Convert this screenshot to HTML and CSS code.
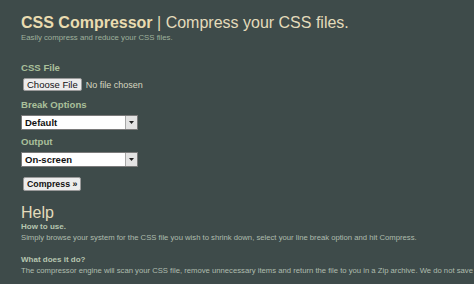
FILE: index.html
```html
<!DOCTYPE html>
<html>
<head>
<meta charset="utf-8">
<title>CSS Compressor</title>
<link rel="stylesheet" href="styles.css">
</head>
<body>
<div class="page">
  <header class="header">
    <h1 class="title"><strong>CSS Compressor</strong> | Compress your CSS files.</h1>
    <p class="tagline">Easily compress and reduce your CSS files.</p>
  </header>
  <form class="form">
    <div class="field field-file">
      <label class="label">CSS File</label>
      <div class="file-row">
        <span class="btn">Choose File</span>
        <span class="file-status">No file chosen</span>
      </div>
    </div>
    <div class="field">
      <label class="label">Break Options</label>
      <div class="select">
        <span class="select-value">Default</span>
        <span class="select-arrow"><svg width="5" height="3" viewBox="0 0 5 3"><path d="M0 0H5L2.5 3Z" fill="#222"/></svg></span>
      </div>
    </div>
    <div class="field">
      <label class="label">Output</label>
      <div class="select">
        <span class="select-value">On-screen</span>
        <span class="select-arrow"><svg width="5" height="3" viewBox="0 0 5 3"><path d="M0 0H5L2.5 3Z" fill="#222"/></svg></span>
      </div>
    </div>
    <div class="submit-row">
      <span class="btn btn-bold">Compress &raquo;</span>
    </div>
  </form>
  <section class="help">
    <h2 class="help-title">Help</h2>
    <h3 class="help-q">How to use.</h3>
    <p class="help-a">Simply browse your system for the CSS file you wish to shrink down, select your line break option and hit Compress.</p>
    <h3 class="help-q help-q-gap">What does it do?</h3>
    <p class="help-a">The compressor engine will scan your CSS file, remove unnecessary items and return the file to you in a Zip archive. We do not save</p>
  </section>
</div>
</body>
</html>
```
FILE: styles.css
```css
html, body {
  margin: 0;
  padding: 0;
  background: #3e4b4a;
  overflow: hidden;
}
body {
  font-family: "Liberation Sans", Arial, sans-serif;
  width: 474px;
  height: 284px;
}
.page {
  padding: 13px 0 0 21px;
  white-space: nowrap;
}
.title {
  margin: 0;
  font-size: 16px;
  line-height: 20px;
  font-weight: normal;
  color: #e4dbbb;
}
.title strong {
  font-weight: bold;
  color: #eadcb0;
}
.tagline {
  margin: 0;
  font-size: 7.8px;
  line-height: 10px;
  color: #9fb19d;
}
.form {
  margin-top: 19px;
}
.field {
  margin-bottom: 6px;
}
.field-file {
  margin-bottom: 8px;
}
.label {
  display: block;
  font-size: 9.6px;
  font-weight: bold;
  line-height: 12px;
  color: #aac09b;
  margin-bottom: 4px;
}
.file-row {
  display: flex;
  align-items: center;
  gap: 4px;
  padding-left: 2px;
}
.btn {
  display: inline-block;
  font-size: 9.5px;
  line-height: 11px;
  padding: 0 3px;
  color: #111;
  background: #ececec;
  border: 1px solid #9a9a9a;
  border-radius: 2px;
}
.btn-bold {
  font-weight: bold;
  font-size: 8.8px;
  padding: 1px 3px 0;
}
.file-status {
  font-size: 9px;
  color: #d6d6c0;
}
.select {
  display: flex;
  width: 117px;
  height: 15px;
  box-sizing: border-box;
  background: #fff;
  border: 1px solid #7a7a7a;
}
.select-value {
  flex: 1;
  font-size: 9.5px;
  font-weight: bold;
  line-height: 13px;
  padding-left: 3px;
  color: #111;
}
.select-arrow {
  width: 11px;
  display: flex;
  align-items: center;
  justify-content: center;
  background: #e3e3e3;
  border-left: 1px solid #a8a8a8;
}
.submit-row {
  padding: 0 0 0 2px;
}
.help {
  margin-top: 12px;
}
.help-title {
  margin: 0;
  font-size: 16px;
  line-height: 19px;
  font-weight: normal;
  color: #e4dbbb;
}
.help-q {
  margin: 0;
  font-size: 8px;
  line-height: 10px;
  font-weight: bold;
  color: #b6c6b0;
}
.help-q-gap {
  margin-top: 12px;
}
.help-a {
  margin: 1px 0 0 0;
  font-size: 7.7px;
  line-height: 10px;
  color: #aebcae;
}
```
